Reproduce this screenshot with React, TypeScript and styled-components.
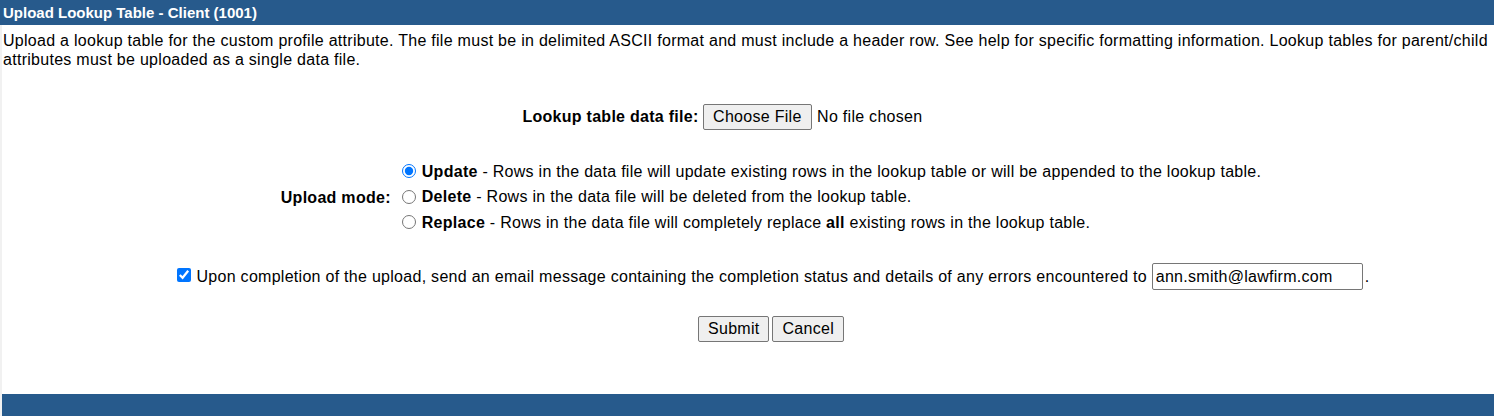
import React from 'react';
import styled, { createGlobalStyle } from 'styled-components';

const GlobalStyle = createGlobalStyle`
    html, body {
        margin: 0;
        padding: 0;
        background: #ffffff;
    }
    body {
        font-family: "Liberation Sans", Arial, sans-serif;
        font-size: 16px;
        letter-spacing: 0.28px;
        color: #000000;
    }
`;

const Page = styled.div`
    min-height: 416px;
    display: flex;
    flex-direction: column;
`;

const TitleBar = styled.div`
    background: #275a8c;
    color: #ffffff;
    font-weight: bold;
    font-size: 15px;
    letter-spacing: 0;
    line-height: 17px;
    padding: 4px 3px;
`;

const Body = styled.div`
    flex: 1;
    display: flex;
    flex-direction: column;
    border-left: 2px solid #f1f1f1;
`;

const Intro = styled.p`
    margin: 6px 0 0;
    padding: 0 4px 0 1px;
    line-height: 19px;
`;

const FileRow = styled.div`
    display: flex;
    justify-content: center;
    align-items: center;
    margin-top: 35px;
    height: 26px;
`;

const FieldLabel = styled.label`
    font-weight: bold;
    margin-right: 4px;
`;

const FileInput = styled.input`
    width: 271px;
    font: inherit;
    letter-spacing: inherit;
    margin: 0;

    &::file-selector-button {
        font: inherit;
        letter-spacing: inherit;
        padding: 3px 9.5px;
        margin: 0 5px 0 0;
        border: 1px solid #767676;
        border-radius: 2px;
        background: #efefef;
        color: #000000;
    }
`;

const Form = styled.div`
    padding-left: 46px;
    display: flex;
    flex-direction: column;
    align-items: center;
`;

const ModeTable = styled.div`
    display: grid;
    grid-template-columns: auto auto;
    column-gap: 6px;
    align-items: center;
    margin-top: 29px;
`;

const ModeLabel = styled.div`
    font-weight: bold;
    text-align: right;
    padding-top: 2px;
`;

const Options = styled.div`
    display: flex;
    flex-direction: column;
`;

const Option = styled.label`
    display: flex;
    align-items: center;
    height: 25.5px;
`;

const Radio = styled.input`
    width: 14px;
    height: 14px;
    margin: 0 6px 1px 5px;
    accent-color: #0075ff;
`;

const NotifyRow = styled.div`
    margin-top: 27px;
    line-height: 19px;
    text-align: center;
`;

const Checkbox = styled.input`
    width: 14px;
    height: 14px;
    margin: 3px 6px 3px 4px;
    accent-color: #0075ff;
`;

const EmailInput = styled.input`
    width: 211px;
    box-sizing: border-box;
    font: inherit;
    letter-spacing: inherit;
    padding: 3px 3px;
    margin: 0 2px 0 0;
    border: 1px solid #767676;
    border-radius: 2px;
`;

const Actions = styled.div`
    display: flex;
    gap: 3px;
    margin-top: 26px;
`;

const Button = styled.button`
    font: inherit;
    letter-spacing: inherit;
    padding: 3px 9px;
    border: 1px solid #767676;
    border-radius: 2px;
    background: #efefef;
    color: #000000;
`;

const Footer = styled.div`
    margin-top: auto;
    height: 22px;
    background: #275a8c;
`;

type ModeOption = {
    value: string;
    name: string;
    text: React.ReactNode;
};

const modes: ModeOption[] = [
    {
        value: 'update',
        name: 'Update',
        text: ' - Rows in the data file will update existing rows in the lookup table or will be appended to the lookup table.'
    },
    {
        value: 'delete',
        name: 'Delete',
        text: ' - Rows in the data file will be deleted from the lookup table.'
    },
    {
        value: 'replace',
        name: 'Replace',
        text: (
            <>
                {' - Rows in the data file will completely replace '}
                <b>all</b>
                {' existing rows in the lookup table.'}
            </>
        )
    }
];

export default function App() {
    const [mode, setMode] = React.useState('update');
    const [notify, setNotify] = React.useState(true);
    const [email, setEmail] = React.useState('ann.smith@lawfirm.com');

    return (
        <Page>
            <GlobalStyle />
            <TitleBar>Upload Lookup Table - Client (1001)</TitleBar>
            <Body>
                <Intro>
                    Upload a lookup table for the custom profile attribute. The file must be in
                    delimited ASCII format and must include a header row. See help for specific
                    formatting information. Lookup tables for parent/child attributes must be
                    uploaded as a single data file.
                </Intro>

                <FileRow>
                    <FieldLabel htmlFor="lookup-file">Lookup table data file:</FieldLabel>
                    <FileInput id="lookup-file" type="file" />
                </FileRow>

                <Form>
                    <ModeTable>
                        <ModeLabel>Upload mode:</ModeLabel>
                        <Options>
                            {modes.map((m) => (
                                <Option key={m.value}>
                                    <Radio
                                        type="radio"
                                        name="mode"
                                        value={m.value}
                                        checked={mode === m.value}
                                        onChange={() => setMode(m.value)}
                                    />
                                    <span>
                                        <b>{m.name}</b>
                                        {m.text}
                                    </span>
                                </Option>
                            ))}
                        </Options>
                    </ModeTable>

                    <NotifyRow>
                        <Checkbox
                            type="checkbox"
                            checked={notify}
                            onChange={(e) => setNotify(e.target.checked)}
                        />
                        Upon completion of the upload, send an email message containing the
                        completion status and details of any errors encountered to{' '}
                        <EmailInput
                            type="text"
                            value={email}
                            onChange={(e) => setEmail(e.target.value)}
                        />
                        .
                    </NotifyRow>

                    <Actions>
                        <Button type="button">Submit</Button>
                        <Button type="button">Cancel</Button>
                    </Actions>
                </Form>

                <Footer />
            </Body>
        </Page>
    );
}
